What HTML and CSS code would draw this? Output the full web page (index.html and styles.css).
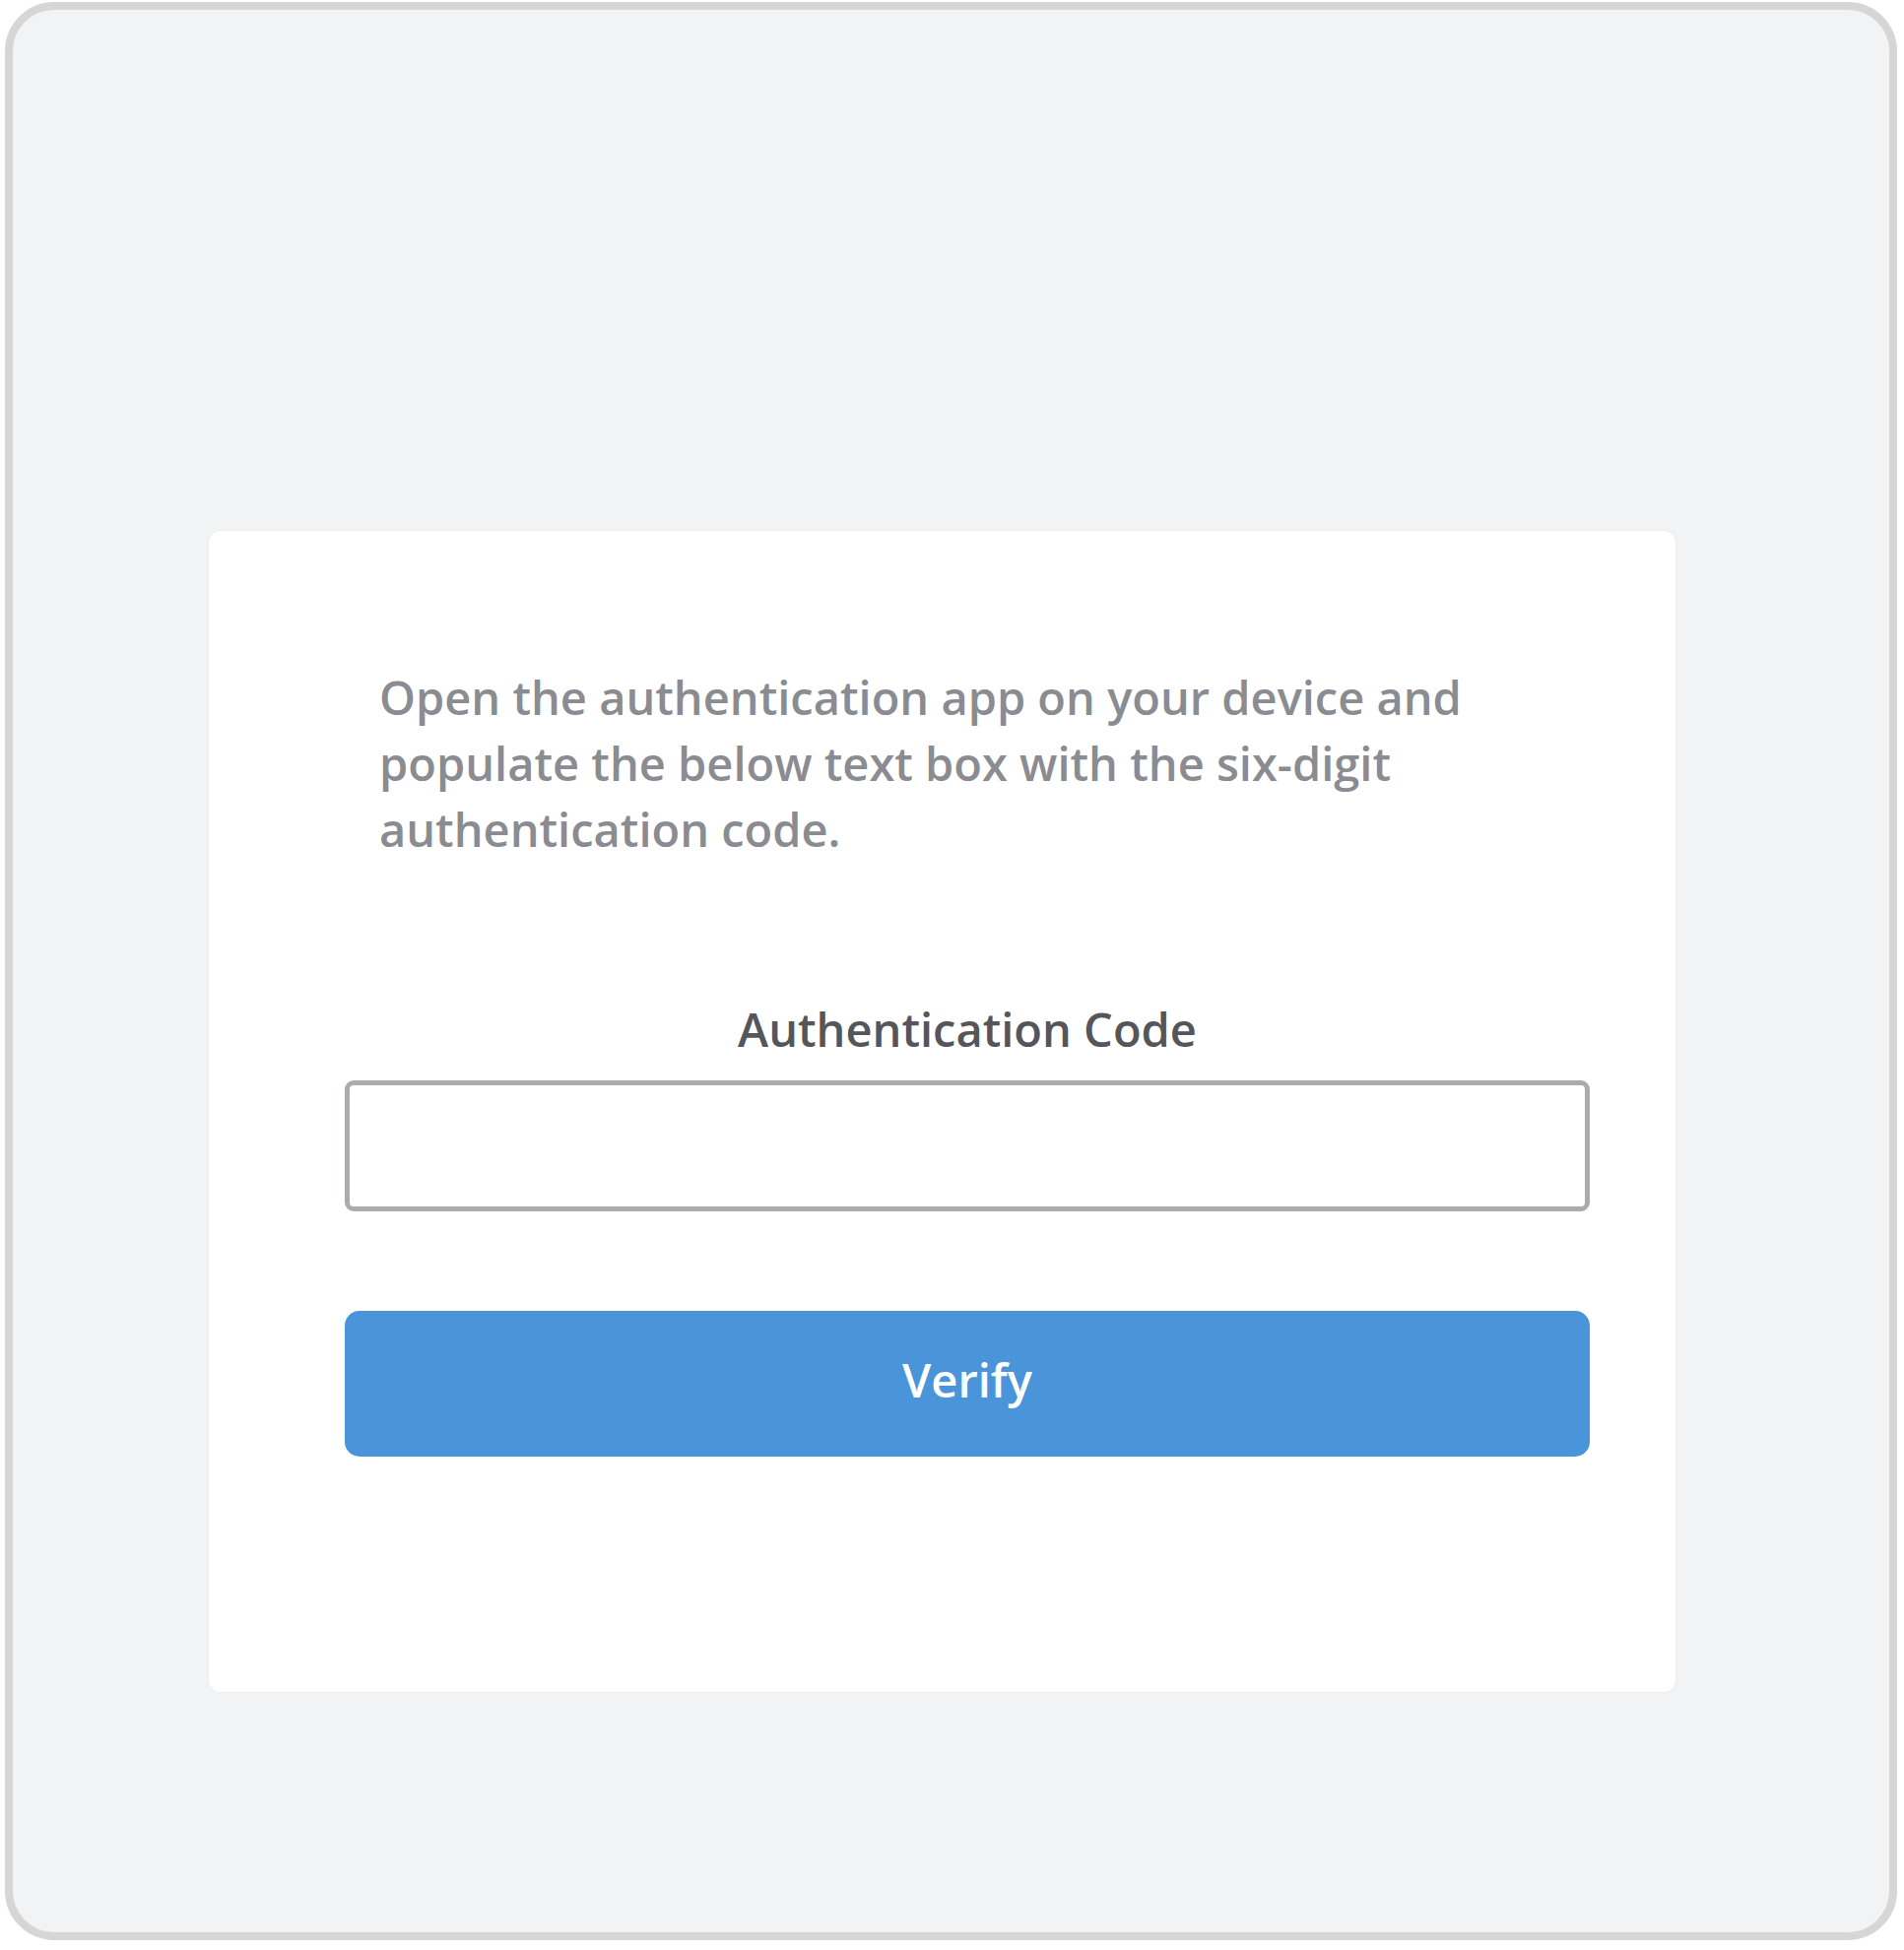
FILE: index.html
```html
<!DOCTYPE html>
<html lang="en">
<head>
<meta charset="utf-8">
<title>Authentication Code</title>
<link rel="stylesheet" href="styles.css">
</head>
<body>
<div class="frame">
  <div class="card">
    <p class="intro">Open the authentication app on your device and populate the below text box with the six-digit authentication code.</p>
    <label class="label" for="code">Authentication Code</label>
    <input class="code-input" id="code" type="text">
    <button class="verify" type="button">Verify</button>
  </div>
</div>
</body>
</html>
```
FILE: styles.css
```css
html, body {
  margin: 0;
  padding: 0;
  background: #ffffff;
}
body {
  font-family: "Open Sans", "Liberation Sans", sans-serif;
}
.frame {
  box-sizing: border-box;
  margin: 2px 7px 0 5px;
  height: 1968px;
  border: 8px solid #d6d6d6;
  border-radius: 50px;
  background: #f2f3f5;
  padding: 529px 0 0 199px;
}
.card {
  box-sizing: border-box;
  width: 1489px;
  height: 1179px;
  background: #ffffff;
  border-radius: 12px;
  box-shadow: 0 0 0 1px #eceef1;
  padding: 136px 87px 0 138px;
  display: flex;
  flex-direction: column;
}
.intro {
  margin: 0 0 0 35px;
  max-width: 1180px;
  font-size: 47px;
  font-weight: 600;
  line-height: 67px;
  color: #8a8c92;
}
.label {
  display: block;
  margin-top: 139px;
  text-align: center;
  font-size: 47px;
  font-weight: 600;
  line-height: 60px;
  color: #55565b;
}
.code-input {
  box-sizing: border-box;
  margin-top: 22px;
  width: 100%;
  height: 133px;
  border: 5px solid #aaabaf;
  border-radius: 9px;
  background: #ffffff;
  outline: none;
}
.verify {
  box-sizing: border-box;
  margin-top: 101px;
  width: 100%;
  height: 148px;
  padding: 0 0 9px;
  border: none;
  border-radius: 15px;
  background: #4a95d9;
  color: #ffffff;
  font-family: "Open Sans", "Liberation Sans", sans-serif;
  font-size: 47px;
  font-weight: 600;
  cursor: pointer;
}
```
